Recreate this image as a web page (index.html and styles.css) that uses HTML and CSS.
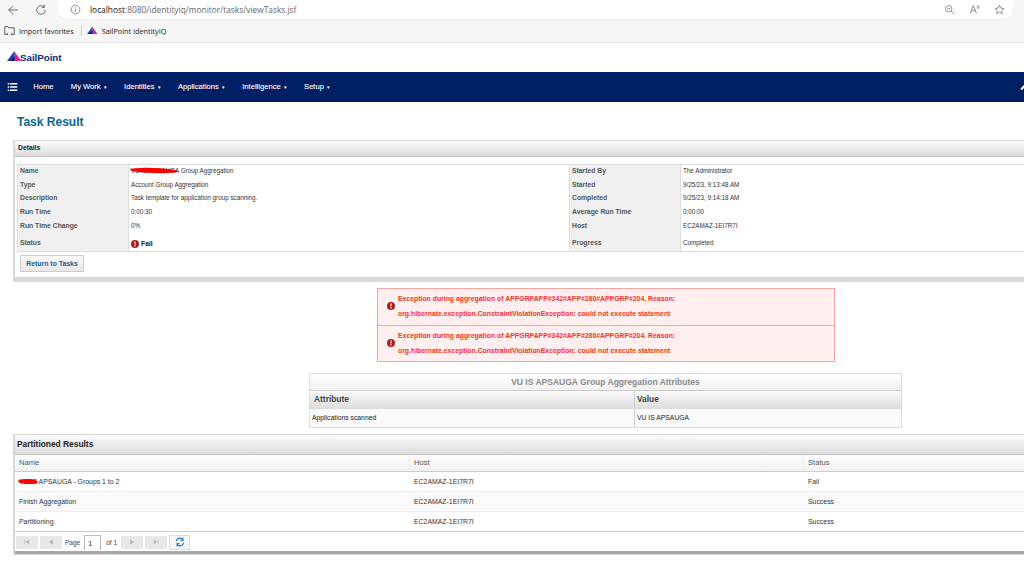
FILE: index.html
```html
<!DOCTYPE html>
<html lang="en">
<head>
<meta charset="utf-8">
<title>Task Result</title>
<link rel="stylesheet" href="styles.css">
</head>
<body>
<header class="browser">
  <div class="toolbar">
    <svg class="tb-icon back" viewBox="0 0 14 14"><path d="M13 7H2M7 2 2 7l5 5"/></svg>
    <svg class="tb-icon reload" viewBox="0 0 14 14"><path d="M12 7a5 5 0 1 1-1.600-3.700M11 1v3H8"/></svg>
    <div class="address">
      <svg class="tb-icon info" viewBox="0 0 14 14"><circle cx="7" cy="7" r="5.500"/><path d="M7 6v4M7 4v1"/></svg>
      <span class="url"><b>localhost</b>:8080/identityiq/monitor/tasks/viewTasks.jsf</span>
      <span class="addr-actions">
        <svg class="tb-icon" viewBox="0 0 14 14"><circle cx="6" cy="6" r="4"/><path d="M4 6h4M9 9l4 4"/></svg>
        <svg class="tb-icon" viewBox="0 0 14 14"><path d="M1.500 12 5.500 2l4 10M3 8.500h5M10 2.500c1 .7 1 2.300 0 3M11.500 1.500c1.500 1.300 1.500 3.700 0 5"/></svg>
        <svg class="tb-icon" viewBox="0 0 14 14"><path d="m7 1.500 1.700 3.700 4 .5-3 2.700.8 4L7 10.500l-3.500 1.900.8-4-3-2.700 4-.5z"/></svg>
      </span>
    </div>
  </div>
  <div class="bookmarks">
    <svg class="tb-icon folder" viewBox="0 0 14 14"><path d="M4 12H1V2h4l1 1.500h7V12h-3M5 10l-1.500 1.500L5 13M9 10l1.500 1.500L9 13"/></svg>
    <span class="bm-text">Import favorites</span>
    <span class="bm-sep"></span>
    <svg class="sail small" viewBox="0 0 22 18"><path class="s-pink" d="M11 1l10 14H11z"/><path class="s-blue" d="M0 15 11 0v15z"/><path class="s-navy" d="M5 15h6V8z"/></svg>
    <span class="bm-text">SailPoint IdentityIQ</span>
  </div>
</header>

<div class="brand">
  <svg class="sail" viewBox="0 0 22 18"><path class="s-pink" d="M11 1l10 14H11z"/><path class="s-blue" d="M0 15 11 0v15z"/><path class="s-navy" d="M5 15h6V8z"/></svg>
  <span class="brand-name">SailPoint</span>
</div>

<nav class="nav">
  <svg class="menu-icon" viewBox="0 0 12 10"><path d="M0 0h2v2H0zM3 0h9v2H3zM0 4h2v2H0zM3 4h9v2H3zM0 8h2v2H0zM3 8h9v2H3z"/></svg>
  <a class="nav-item home">Home</a>
  <a class="nav-item">My Work <i>▾</i></a>
  <a class="nav-item">Identities <i>▾</i></a>
  <a class="nav-item">Applications <i>▾</i></a>
  <a class="nav-item">Intelligence <i>▾</i></a>
  <a class="nav-item">Setup <i>▾</i></a>
  <span class="nav-corner"></span>
</nav>

<main class="page">
  <h1 class="title">Task Result</h1>

  <section class="panel details">
    <h2 class="panel-head small-head">Details</h2>
    <div class="panel-body">
      <table class="info-table">
        <colgroup><col class="c1"><col class="c2"><col class="c3"><col></colgroup>
        <tr><th>Name</th><td class="rel">VU IS APSAUGA Group Aggregation<span class="redact r1"></span></td><th>Started By</th><td>The Administrator</td></tr>
        <tr><th>Type</th><td>Account Group Aggregation</td><th>Started</th><td>9/25/23, 9:13:48 AM</td></tr>
        <tr><th>Description</th><td>Task template for application group scanning.</td><th>Completed</th><td>9/25/23, 9:14:18 AM</td></tr>
        <tr><th>Run Time</th><td>0:00:30</td><th>Average Run Time</th><td>0:00:00</td></tr>
        <tr><th>Run Time Change</th><td>0%</td><th>Host</th><td>EC2AMAZ-1EI7R7I</td></tr>
        <tr class="last"><th>Status</th><td><span class="fail"><svg class="err" viewBox="0 0 10 10"><circle cx="5" cy="5" r="5"/><path d="M4.200 2h1.600l-.3 3.800h-1zM4.200 6.600h1.600v1.500H4.200z"/></svg><b>Fail</b></span></td><th>Progress</th><td>Completed</td></tr>
      </table>
      <button class="btn">Return to Tasks</button>
    </div>
  </section>

  <div class="errors">
    <div class="error-row"><svg class="err" viewBox="0 0 10 10"><circle cx="5" cy="5" r="5"/><path d="M4.200 2h1.600l-.3 3.800h-1zM4.200 6.600h1.600v1.500H4.200z"/></svg><p>Exception during aggregation of APPGRPAPP#342#APP#280#APPGRP#204. Reason:<br>org.hibernate.exception.ConstraintViolationException: could not execute statement</p></div>
    <div class="error-row"><svg class="err" viewBox="0 0 10 10"><circle cx="5" cy="5" r="5"/><path d="M4.200 2h1.600l-.3 3.800h-1zM4.200 6.600h1.600v1.500H4.200z"/></svg><p>Exception during aggregation of APPGRPAPP#342#APP#280#APPGRP#204. Reason:<br>org.hibernate.exception.ConstraintViolationException: could not execute statement</p></div>
  </div>

  <section class="attrs">
    <div class="attrs-title">VU IS APSAUGA Group Aggregation Attributes</div>
    <div class="attrs-head"><span>Attribute</span><span>Value</span></div>
    <div class="attrs-row"><span>Applications scanned</span><span>VU IS APSAUGA</span></div>
  </section>

  <section class="panel results">
    <h2 class="panel-head">Partitioned Results</h2>
    <div class="grid grid-head"><span>Name</span><span>Host</span><span>Status</span></div>
    <div class="grid grid-row"><span class="rel">VU IS APSAUGA - Groups 1 to 2<span class="redact r2"></span></span><span>EC2AMAZ-1EI7R7I</span><span>Fail</span></div>
    <div class="grid grid-row alt"><span>Finish Aggregation</span><span>EC2AMAZ-1EI7R7I</span><span>Success</span></div>
    <div class="grid grid-row"><span>Partitioning</span><span>EC2AMAZ-1EI7R7I</span><span>Success</span></div>
    <div class="pager">
      <span class="pg-btn"><svg viewBox="0 0 8 8"><path d="M1 1v6M7 1 3 4l4 3"/></svg></span>
      <span class="pg-btn"><svg viewBox="0 0 8 8"><path d="M6 1 2 4l4 3z"/></svg></span>
      <span class="pg-label">Page</span>
      <span class="pg-input">1</span>
      <span class="pg-label pg-of">of 1</span>
      <span class="pg-btn"><svg viewBox="0 0 8 8"><path d="m2 1 4 3-4 3z"/></svg></span>
      <span class="pg-btn"><svg viewBox="0 0 8 8"><path d="M7 1v6M1 1l4 3-4 3"/></svg></span>
      <span class="pg-refresh"><svg viewBox="0 0 12 12"><path d="M1.500 5A4.500 4.500 0 0 1 9.500 3M9.500 1v3h-3M10.500 7A4.500 4.500 0 0 1 2.500 9M2.500 11V8h3"/></svg></span>
    </div>
  </section>
</main>
</body>
</html>
```
FILE: styles.css
```css
* { box-sizing: border-box; }
html, body { margin: 0; height: 563px; overflow: hidden; background: #fff; }
body { font-family: "Liberation Sans", Arial, sans-serif; font-size: 6.8px; color: #333; width: 1024px; }

/* Browser chrome */
.browser { background: #f6f6f6; height: 43px; border-bottom: 1px solid #e6e6e6; }
.toolbar { height: 19px; display: flex; align-items: center; padding-left: 7px; }
.tb-icon { width: 12px; height: 12px; fill: none; stroke: #555; stroke-width: 1; flex: none; }
.back { margin-right: 16px; }
.reload { margin-right: 11px; }
.address { width: 955px; height: 19px; background: #fff; border-radius: 0 0 10px 10px; display: flex; align-items: center; padding: 0 8px 1px 12px; box-shadow: 0 1px 1px #eee; }
.info { stroke: #777; width: 11px; height: 11px; margin-right: 9px; }
.url { font-family: "Open Sans", sans-serif; font-size: 8.350px; color: #666; white-space: nowrap; }
.url b { font-weight: 400; color: #111; }
.addr-actions { margin-left: auto; display: flex; gap: 14px; }
.addr-actions .tb-icon { width: 11px; height: 11px; stroke: #777; }
.bookmarks { height: 23px; display: flex; align-items: center; padding-left: 4px; }
.folder { width: 11px; height: 11px; stroke: #333; margin-right: 4px; }
.bm-text { font-family: "Open Sans", sans-serif; font-size: 7.300px; color: #222; white-space: nowrap; }
.bm-sep { width: 1px; height: 10px; background: #ccc; margin: 0 5px 0 7px; }
.sail { width: 15px; height: 14px; flex: none; }
.sail.small { width: 11px; height: 10px; margin-right: 4px; }
.s-blue { fill: #1f3fb5; }
.s-pink { fill: #e0209a; }
.s-navy { fill: #031d6b; }

.brand { height: 29px; display: flex; align-items: center; padding-left: 7px; background: #fff; }
.brand .sail { margin-right: -2px; margin-top: -2px; }
.brand-name { font-size: 9.800px; font-weight: 700; color: #0d2b7a; letter-spacing: -.05px; }

/* Nav */
.nav { height: 30px; background: #002063; display: flex; align-items: center; gap: 17.300px; position: relative; color: #fff; font-size: 7.600px; border-bottom: 1px solid #00184f; }
.menu-icon { width: 11px; height: 8px; fill: #fff; margin-left: 7px; flex: none; }
.nav-item { color: #fff; white-space: nowrap; -webkit-text-stroke: .1px #fff; }
.nav-item i { font-style: normal; font-size: 5px; margin-left: 1px; }
.home { margin-left: -2px; }
.nav-corner { position: absolute; right: -3px; top: 14px; width: 7px; height: 2px; background: #fff; transform: rotate(-45deg); }

/* Page */
.page { padding: 0 0 0 13px; width: 1060px; }
.title { margin: 0; padding: 14px 0 0 4px; height: 38px; font-size: 12px; font-weight: 700; color: #0b6394; line-height: 13px; }

.panel { border: 1px solid #d8d8d8; border-right: 0; }
.panel-head { margin: 0; height: 19px; padding: 0 4px; font-size: 8.400px; line-height: 18px; font-weight: 700; color: #222; background: linear-gradient(#fbfbfb, #dcdcdc); border-bottom: 1px solid #c4c4c4; }
.small-head { height: 16px; font-size: 6.800px; line-height: 13px; padding-left: 3px; }

.details { height: 142px; border-bottom: 5px solid #d8d8d8; border-left-width: 2px; }
.panel-body { padding: 7px 0 0 2px; }
.info-table { border-collapse: collapse; table-layout: fixed; width: 1050px; border-top: 1px solid #ddd; border-bottom: 1px solid #ddd; }
.c1 { width: 111px; } .c2 { width: 441px; } .c3 { width: 111px; }
.info-table th, .info-table td { height: 13.700px; padding: 0 2px 2px; font-size: 6.300px; font-weight: 400; text-align: left; white-space: nowrap; }
.info-table th { font-size: 6.800px; background: #f0f0f0; border-right: 1px solid #ddd; border-left: 1px solid #ddd; font-weight: 700; color: #555; }
.info-table tr.last th, .info-table tr.last td { height: 19px; padding-bottom: 0; }
.rel { position: relative; }
.redact { position: absolute; background: #f00; border-radius: 50%; transform: rotate(2deg); }
.r1 { left: 1px; top: 3px; width: 48px; height: 5px; }
.r2 { left: 3px; top: 7px; width: 20px; height: 5px; }
.fail { display: inline-flex; align-items: center; gap: 2px; padding-top: 4px; }
.fail b { color: #222; font-size: 6.800px; }
.err { width: 8px; height: 8px; flex: none; }
.err circle { fill: #a81e1e; }
.err path { fill: #fff; }
.btn { display: block; margin: 3px 0 0 3px; width: 64px; height: 17px; padding: 0; font: 700 6.900px "Liberation Sans", sans-serif; color: #0b6394; background: linear-gradient(#fafafa, #e8e8e8); border: 1px solid #ccc; border-radius: 1px; }

.errors { margin: 6px 0 0 364px; width: 458px; border: 1px solid #f6a5a0; background: #ffefee; }
.error-row { height: 36px; display: flex; align-items: center; padding: 0 0 2px 9px; gap: 3px; }
.error-row + .error-row { border-top: 1px solid #f6a5a0; }
.error-row p { margin: 0; font-size: 6.870px; font-weight: 700; line-height: 15px; color: #f2352c; white-space: nowrap; }

.attrs { margin: 11px 0 0 296px; width: 593px; border: 1px solid #ddd; }
.attrs-title { height: 17px; text-align: center; font-size: 8.500px; line-height: 17px; font-weight: 700; color: #8a8a8a; background: linear-gradient(#fff, #f0f0f0); border-bottom: 1px solid #ccc; }
.attrs-head, .attrs-row { display: grid; grid-template-columns: 324px 1fr; }
.attrs-head { height: 18px; font-size: 8.400px; line-height: 17px; font-weight: 700; color: #444; background: linear-gradient(#fafafa, #dcdcdc); }
.attrs-head span { padding-left: 4px; }
.attrs-head span + span, .attrs-row span + span { border-left: 1px solid #ccc; padding-left: 2px; }
.attrs-row { height: 18px; line-height: 18px; color: #222; background: #f9f9f9; }
.attrs-row span { padding-left: 2px; }

.results { margin-top: 6px; border-left-width: 2px; }
.results .panel-head { height: 20px; line-height: 18px; padding-left: 2px; }
.grid { display: grid; grid-template-columns: 394px 394px 1fr; }
.grid span { padding-left: 4px; }
.grid-head { height: 17px; font-size: 7.600px; line-height: 16px; color: #555; background: linear-gradient(#fff, #f0f0f0); border-bottom: 1px solid #ccc; }
.grid-head span + span { border-left: 1px solid #eee; }
.grid-row { height: 20px; font-size: 6.900px; line-height: 19px; color: #333; border-bottom: 1px solid #eee; }
.grid-row.alt { background: #fafafa; }
.grid-row span + span { padding-left: 5px; }
.pager { height: 18px; display: flex; align-items: center; border-top: 1px solid #ccc; padding: 1px 0 0 1px; background: #fff; margin-top: -1px; border-bottom: 3px solid #a8a8a8; box-sizing: content-box; }
.pg-btn { width: 22px; height: 13px; background: #e8e8e8; margin-right: 2px; display: flex; align-items: center; justify-content: center; }
.pg-btn svg { width: 6px; height: 6px; fill: #bbb; stroke: #aaa; stroke-width: .8; }
.pg-label { font-size: 6.500px; color: #444; margin: 0 4px 0 1px; }
.pg-of { margin-left: 5px; }
.pg-input { width: 17px; height: 15px; border: 1px solid #bbb; border-bottom: 0; font-size: 7px; line-height: 16px; padding-left: 3px; color: #222; }
.pg-refresh { width: 21px; height: 15px; border: 1px solid #ddd; display: flex; align-items: center; justify-content: center; background: #f6f6f6; }
.pg-refresh svg { width: 10px; height: 10px; fill: none; stroke: #2a7fc4; stroke-width: 1.500; }
```
